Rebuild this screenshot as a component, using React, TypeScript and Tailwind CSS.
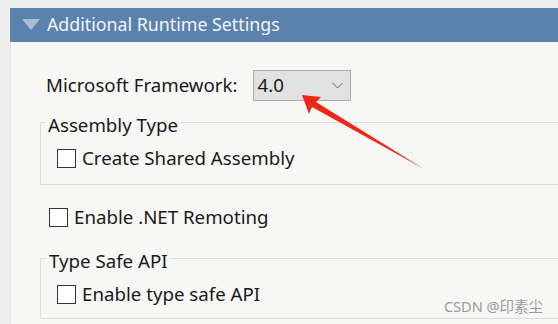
import React from 'react';

const font = { fontFamily: '"Noto Sans", "Noto Sans CJK SC", sans-serif' };

const Check: React.FC<{ label: string }> = ({ label }) => (
  <label className="flex items-center gap-[6px] h-[20px] text-[18.7px] leading-[20px] text-[#1a1a1a]">
    <span className="w-[19px] h-[19px] border-[1.5px] border-[#333] bg-white shrink-0" />
    {label}
  </label>
);

const Group: React.FC<{ title: string; offset: string; height: string; children: React.ReactNode }> = ({ title, offset, height, children }) => (
  <div className={`mr-[-20px] ${height} border border-[#dcdcdc]`}>
    <span className={`block w-fit -mt-[9px] ${offset} px-[2px] bg-[#f7f7f5] text-[18.7px] leading-[22px] text-[#1a1a1a]`}>
      {title}
    </span>
    <div className="mt-[12px] pl-[16px]">{children}</div>
  </div>
);

const Arrow: React.FC = () => (
  <svg className="absolute left-0 top-0 pointer-events-none" width="558" height="324">
    <polygon points="302,95 321,97 316,102 424,169 312,107 309,114" fill="#f02618" />
  </svg>
);

export default function App() {
  return (
    <div className="relative w-[558px] h-[324px] bg-[#efefef] pt-[8px] pl-[10px] overflow-hidden" style={font}>
      <div className="h-[34px] bg-[#5b82ad] flex items-center pl-[12px] gap-[7px]">
        <svg width="18" height="12" viewBox="0 0 18 12">
          <polygon points="0,0 18,0 9,11" fill="#a8bcd5" />
        </svg>
        <span className="text-[17.8px] text-[#f1f5fa] leading-none">Additional Runtime Settings</span>
      </div>
      <div className="h-[282px] bg-[#f7f7f5] border-l border-[#e4e4e4] pl-[29px] pt-[28px]">
        <div className="flex items-center gap-[15px] pl-[6px]">
          <span className="text-[18.7px] text-[#1a1a1a]">Microsoft Framework:</span>
          <div className="w-[98px] h-[31px] bg-[#e1e1e1] border border-[#adadad] flex items-center justify-between pl-[4px] pr-[7px]">
            <span className="text-[18.7px] text-[#1a1a1a]">4.0</span>
            <svg width="11" height="7" viewBox="0 0 11 7">
              <polyline points="0.5,1 5.5,6 10.5,1" fill="none" stroke="#606060" strokeWidth="1" />
            </svg>
          </div>
        </div>

        <div className="mt-[21px]">
          <Group title="Assembly Type" offset="ml-[5px]" height="h-[63px]">
            <Check label="Create Shared Assembly" />
          </Group>
        </div>

        <div className="mt-[22px] pl-[9px]">
          <Check label="Enable .NET Remoting" />
        </div>

        <div className="mt-[31px]">
          <Group title="Type Safe API" offset="ml-[6px]" height="h-[61px]">
            <Check label="Enable type safe API" />
          </Group>
        </div>
      </div>
      <span className="absolute right-[15px] top-[296px] text-[14.5px] text-[#9a9a9a]">CSDN @印素尘</span>
      <Arrow />
    </div>
  );
}
